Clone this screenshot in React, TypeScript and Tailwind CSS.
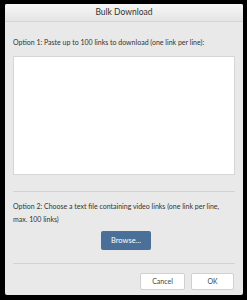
import React from 'react';

const font = { fontFamily: 'Lato, "Open Sans", sans-serif' };

export default function App() {
  return (
    <div className="h-[300px] w-[247px] bg-black pt-[4px] pl-[5px]" style={font}>
      <div className="flex h-[291px] w-[238px] flex-col overflow-hidden rounded-[2px] bg-[#e9e9e9]">
        <div className="flex h-[18px] items-center justify-center border-b border-[#d4d4d4] bg-gradient-to-b from-[#f7f7f7] to-[#e4e4e4] text-[8.5px] text-[#333]">
          Bulk Download
        </div>
        <div className="flex flex-1 flex-col px-[8px]">
          <p className="mt-[16px] text-[7px] leading-[9px] text-[#333]">
            Option 1: Paste up to 100 links to download (one link per line):
          </p>
          <textarea className="mt-[9px] h-[119px] w-[222px] resize-none border border-[#d6d6d6] bg-white outline-none" />
          <div className="mt-[16px] border-t border-[#d2d2d2]" />
          <p className="mt-[8px] text-[7px] leading-[13px] text-[#333]">
            Option 2: Choose a text file containing video links (one link per line, max. 100 links)
          </p>
          <div className="mt-[5px] flex justify-center pl-[4px]">
            <button className="h-[19px] w-[50px] rounded-[2px] bg-[#4a6f99] text-[7.5px] text-white">
              Browse...
            </button>
          </div>
          <div className="mt-[13px] border-t border-[#d2d2d2]" />
          <div className="mt-[9px] flex justify-end gap-[6px] pr-[1px]">
            <button className="h-[17px] w-[45px] rounded-[2px] border border-[#d0d0d0] bg-white text-[7px] text-[#444]">
              Cancel
            </button>
            <button className="h-[17px] w-[43px] rounded-[2px] border border-[#d0d0d0] bg-white text-[7px] text-[#444]">
              OK
            </button>
          </div>
        </div>
      </div>
    </div>
  );
}
